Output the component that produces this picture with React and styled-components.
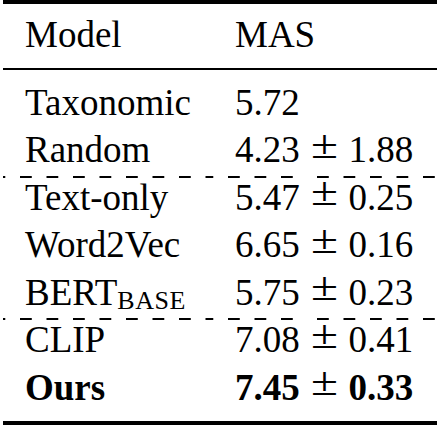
import React from 'react';
import styled, { createGlobalStyle, css } from 'styled-components';

const Global = createGlobalStyle`
  html, body { margin: 0; padding: 0; background: #fff; }
`;

const Table = styled.div`
  width: 434px;
  margin-left: 3px;
  display: flex;
  flex-direction: column;
  font-family: "Liberation Serif", "Times New Roman", Times, serif;
  color: #000;
`;

const Rule = styled.div`
  height: ${p => p.$w}px;
  background: #000;
  margin-top: ${p => p.$mt || 0}px;
  margin-bottom: ${p => p.$mb || 0}px;
`;

const Row = styled.div`
  display: grid;
  grid-template-columns: 210px 92px 132px;
  height: 47.5px;
  line-height: 47.5px;
  font-size: 37px;
  font-weight: ${p => (p.$bold ? 700 : 400)};
  white-space: nowrap;
`;

const dashTop = offset => css`
  background-image: linear-gradient(to right, #000 12px, transparent 12px);
  background-size: 26.5px 1.5px;
  background-repeat: repeat-x;
  background-position: ${offset}px 2px;
`;

const NameCell = styled.div`
  padding-left: 22px;
  ${p => p.$dashed && dashTop(17)}
`;

const MeanCell = styled.div`
  padding-left: 22px;
  grid-column: ${p => (p.$span ? 'span 2' : 'auto')};
  ${p => p.$dashed && dashTop(15)}
`;

const SpreadCell = styled.div`
  padding-left: 6px;
  ${p => p.$dashed && dashTop(12)}
`;

const PlusMinus = styled.span`
  display: inline-block;
  font-weight: 400;
  font-size: 41px;
  line-height: 0;
  transform: scaleX(1.2);
  transform-origin: left center;
  vertical-align: 4.5px;
  margin-right: 15px;
`;

const Sub = styled.span`
  font-size: 26px;
  letter-spacing: 0.5px;
  line-height: 0;
  vertical-align: -3.5px;
`;

const rows = [
  { name: 'Taxonomic', mean: '5.72' },
  { name: 'Random', mean: '4.23', sd: '1.88' },
  { name: 'Text-only', mean: '5.47', sd: '0.25', dashed: true },
  { name: 'Word2Vec', mean: '6.65', sd: '0.16' },
  { name: <>BERT<Sub>BASE</Sub></>, mean: '5.75', sd: '0.23' },
  { name: 'CLIP', mean: '7.08', sd: '0.41', dashed: true },
  { name: 'Ours', mean: '7.45', sd: '0.33', bold: true },
];

export default function App() {
  return (
    <>
      <Global />
      <Table>
        <Rule $w={4} $mb={6.76} />
        <Row>
          <NameCell>Model</NameCell>
          <MeanCell $span>MAS</MeanCell>
        </Row>
        <Rule $w={2} $mt={9.74} $mb={8.76} />
        {rows.map((r, i) => (
          <Row key={i} $bold={r.bold}>
            <NameCell $dashed={r.dashed}>{r.name}</NameCell>
            <MeanCell $dashed={r.dashed}>{r.mean}</MeanCell>
            <SpreadCell $dashed={r.dashed}>
              {r.sd && (
                <>
                  <PlusMinus>±</PlusMinus>
                  {r.sd}
                </>
              )}
            </SpreadCell>
          </Row>
        ))}
        <Rule $w={4} $mt={9.74} />
      </Table>
    </>
  );
}
